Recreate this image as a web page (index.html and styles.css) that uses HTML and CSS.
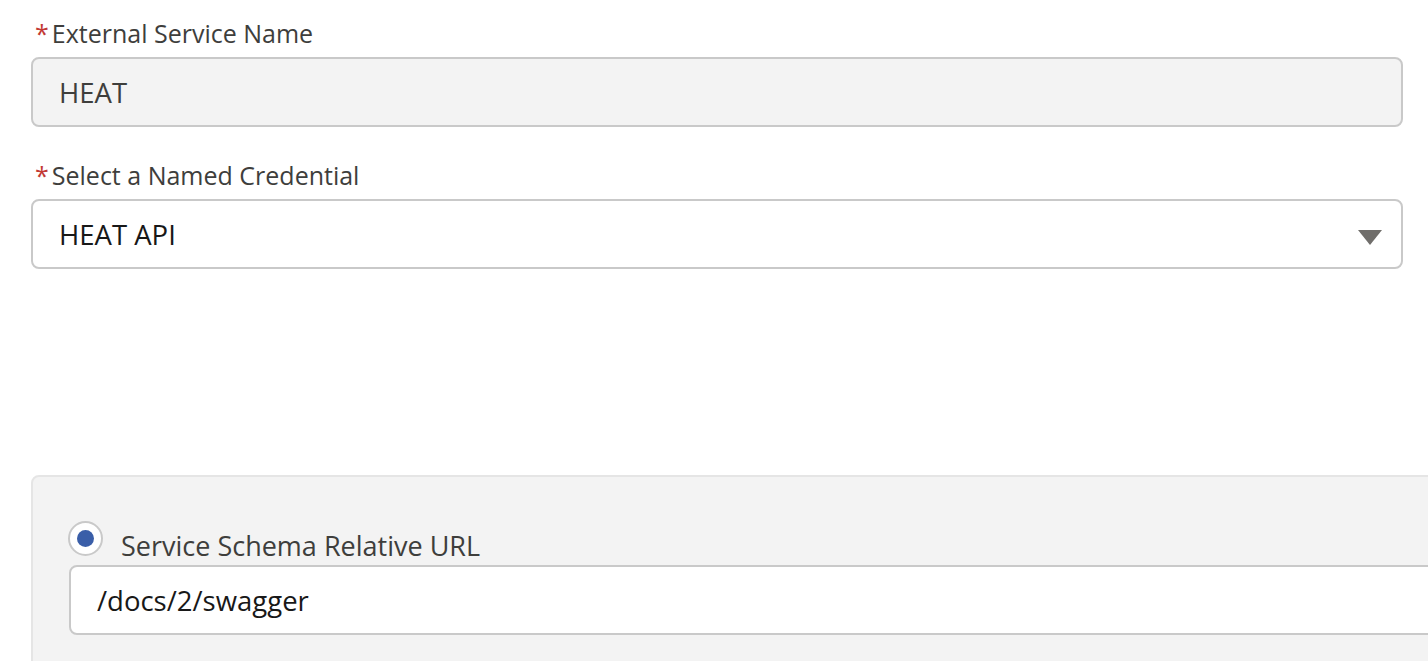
FILE: index.html
```html
<!DOCTYPE html>
<html lang="en">
<head>
  <meta charset="UTF-8" />
  <title>New External Service</title>
  <link rel="stylesheet" href="styles.css">
</head>
<body>

  <form class="service-form">
    <div class="field">
      <label class="field-label" for="serviceName"><abbr class="required" title="required">*</abbr>External Service Name</label>
      <input class="input" id="serviceName" type="text" value="HEAT" disabled />
    </div>

    <div class="field">
      <label class="field-label" for="credential"><abbr class="required" title="required">*</abbr>Select a Named Credential</label>
      <div class="select-wrap">
        <select class="input select" id="credential">
          <option>HEAT API</option>
        </select>
        <svg class="select-arrow" width="24" height="15" viewBox="0 0 24 15">
          <path d="M0 0 L24 0 L12 15 Z" fill="#706e6b" />
        </svg>
      </div>
    </div>

    <div class="schema-panel">
      <div class="radio-row">
        <input class="radio" type="radio" name="schema" id="schemaUrl" checked />
        <label class="radio-label" for="schemaUrl">Service Schema Relative URL</label>
      </div>
      <input class="input input-white" type="text" value="/docs/2/swagger" />
    </div>
  </form>

</body>
</html>
```

FILE: styles.css
```css
html, body {
  height: 100%;
}

body {
  margin: 0;
  background: #fff;
  font-family: 'Open Sans', 'Noto Sans', sans-serif;
  overflow: hidden;
}

.service-form {
  padding: 18px 25px 0 31px;
}

.field {
  margin-bottom: 33px;
}

.field-label {
  display: block;
  font-size: 25px;
  line-height: 30px;
  color: #3e3e3c;
  margin-bottom: 9px;
}

.required {
  color: #c23934;
  text-decoration: none;
  border: none;
  margin: 0 3px 0 4px;
}

.input {
  display: block;
  width: 100%;
  height: 70px;
  box-sizing: border-box;
  padding: 0 26px;
  border: 2px solid #c9c9c9;
  border-radius: 8px;
  font-family: inherit;
  font-size: 27.5px;
  color: #181818;
  background: #fff;
  outline: none;
}

.input:disabled {
  background: #f3f3f3;
  color: #3e3e3c;
}

.select-wrap {
  position: relative;
}

.select {
  appearance: none;
  -webkit-appearance: none;
}

.select-arrow {
  position: absolute;
  right: 21px;
  top: 31px;
  pointer-events: none;
}

/* panel runs off the right and bottom of the view */
.schema-panel {
  margin-top: 206px;
  width: 1460px;
  box-sizing: border-box;
  height: 200px;
  padding: 44px 0 0 35px;
  background: #f3f3f3;
  border: 2px solid #e5e5e5;
  border-radius: 8px;
}

.radio-row {
  display: flex;
  align-items: flex-start;
}

.radio {
  appearance: none;
  -webkit-appearance: none;
  width: 35px;
  height: 35px;
  margin: 0;
  border: 2px solid #c9c9c9;
  border-radius: 50%;
  background: #fff;
  box-sizing: border-box;
  position: relative;
}

.radio:checked::after {
  content: '';
  position: absolute;
  left: 7px;
  top: 7px;
  width: 17px;
  height: 17px;
  border-radius: 50%;
  background: #3a5ea8;
}

.radio-label {
  margin: 7px 0 0 18px;
  font-size: 27px;
  line-height: 36px;
  color: #3e3e3c;
}

.input-white {
  margin-top: 1px;
  margin-left: 1px;
}
```
